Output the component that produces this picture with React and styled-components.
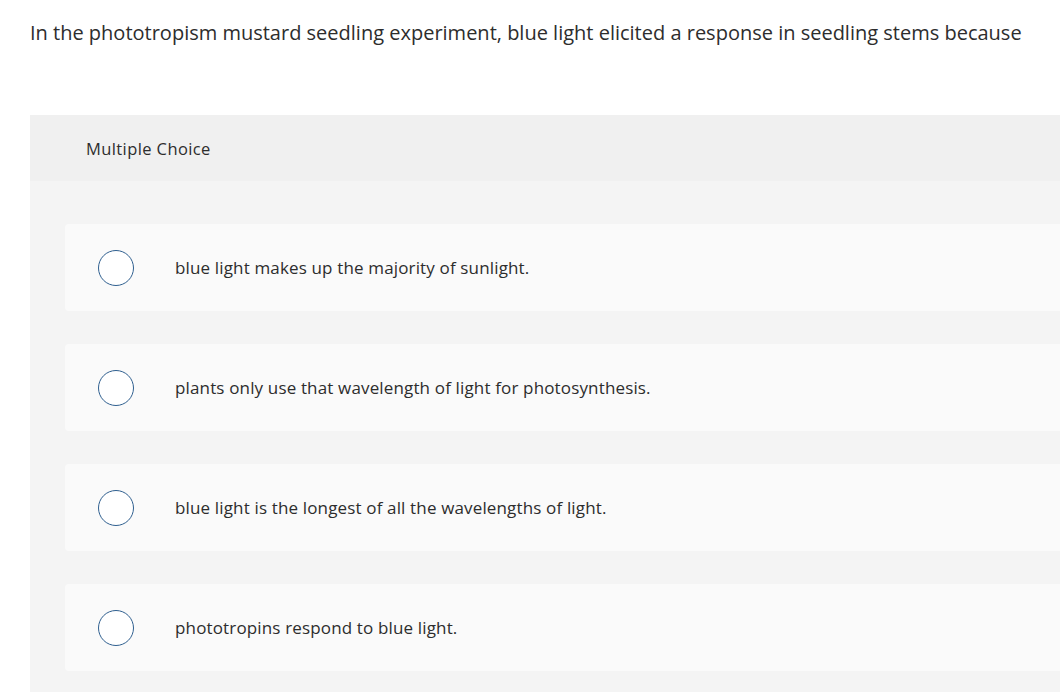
import React from 'react'
import styled, { createGlobalStyle } from 'styled-components'

const GlobalStyle = createGlobalStyle`
  html, body {
    margin: 0;
    padding: 0;
    background: #ffffff;
    overflow: hidden;
  }
  body {
    font-family: "Open Sans", Lato, sans-serif;
    color: #2b2b2b;
  }
`

const Page = styled.div`
  width: 1060px;
  height: 692px;
  overflow: hidden;
  padding: 20px 0 0 30px;
  box-sizing: border-box;
`

const Question = styled.p`
  margin: 0;
  font-size: 20px;
  line-height: 26px;
  color: #2d2d2d;
  white-space: nowrap;
`

const Panel = styled.div`
  margin-top: 69px;
  width: 1080px;
  background: #f4f4f4;
`

const PanelHeader = styled.div`
  height: 66px;
  display: flex;
  align-items: center;
  padding-left: 56px;
  background: #f0f0f0;
  font-size: 16.5px;
  letter-spacing: 0.4px;
  color: #2d2d2d;
`

const Choices = styled.div`
  display: flex;
  flex-direction: column;
  gap: 33px;
  padding: 43px 0 40px 35px;
`

const Choice = styled.label`
  height: 87px;
  display: flex;
  align-items: center;
  padding-left: 33px;
  background: #fafafa;
  border-radius: 4px;
  cursor: pointer;
`

const Radio = styled.span`
  width: 34px;
  height: 34px;
  border: 1px solid #2f5f8f;
  border-radius: 50%;
  background: #ffffff;
  flex-shrink: 0;
`

const ChoiceText = styled.span`
  margin-left: 41px;
  font-size: 17px;
  letter-spacing: 0.15px;
  color: #2d2d2d;
`

const options = [
  'blue light makes up the majority of sunlight.',
  'plants only use that wavelength of light for photosynthesis.',
  'blue light is the longest of all the wavelengths of light.',
  'phototropins respond to blue light.',
]

export default function App() {
  return (
    <Page>
      <GlobalStyle />
      <Question>
        In the phototropism mustard seedling experiment, blue light elicited a response in seedling stems because
      </Question>
      <Panel>
        <PanelHeader>Multiple Choice</PanelHeader>
        <Choices>
          {options.map((opt) => (
            <Choice key={opt}>
              <Radio />
              <ChoiceText>{opt}</ChoiceText>
            </Choice>
          ))}
        </Choices>
      </Panel>
    </Page>
  )
}
